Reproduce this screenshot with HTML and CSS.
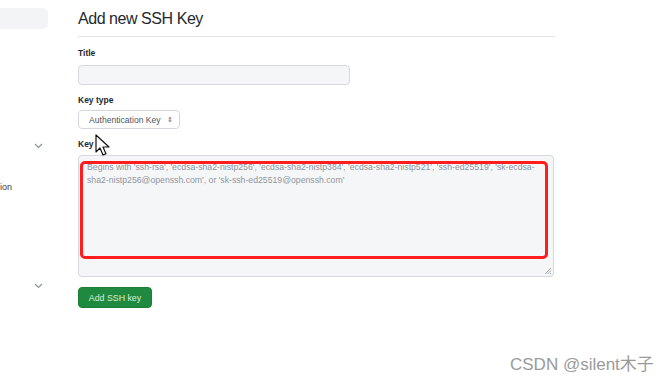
FILE: index.html
```html
<!DOCTYPE html>
<html>
<head>
<meta charset="utf-8">
<link rel="stylesheet" href="styles.css">
</head>
<body>
<div class="page">
  <aside class="sidebar">
    <div class="side-active"></div>
    <div class="side-chev chev1">
      <svg width="9" height="6" viewBox="0 0 9 6"><path d="M1 1l3.5 3.5L8 1" fill="none" stroke="#8c959f" stroke-width="1.2"/></svg>
    </div>
    <div class="side-text">ion</div>
    <div class="side-chev chev2">
      <svg width="9" height="6" viewBox="0 0 9 6"><path d="M1 1l3.5 3.5L8 1" fill="none" stroke="#8c959f" stroke-width="1.2"/></svg>
    </div>
  </aside>
  <main class="main">
    <h2 class="heading">Add new SSH Key</h2>
    <div class="field f-title">
      <label class="label">Title</label>
      <div class="input"></div>
    </div>
    <div class="field f-type">
      <label class="label">Key type</label>
      <div class="select"><span class="sel-text">Authentication Key</span><span class="arrows">&#8661;</span></div>
    </div>
    <div class="field key-field">
      <label class="label">Key</label>
      <div class="textarea">
        <p class="placeholder">Begins with 'ssh-rsa', 'ecdsa-sha2-nistp256', 'ecdsa-sha2-nistp384', 'ecdsa-sha2-nistp521', 'ssh-ed25519', 'sk-ecdsa-sha2-nistp256@openssh.com', or 'sk-ssh-ed25519@openssh.com'</p>
        <div class="highlight"></div>
        <svg class="grip" width="8" height="8" viewBox="0 0 8 8"><path d="M7 1L1 7M7 3.5L3.5 7M7 6L6 7" stroke="#8c959f" stroke-width="0.8"/></svg>
      </div>
      <svg class="cursor" width="16" height="22" viewBox="0 0 16 22"><path d="M1 1v17l4-4 3 7 3-1.3-3-6.7h6z" fill="#fff" stroke="#111" stroke-width="1.2" stroke-linejoin="round"/></svg>
    </div>
    <button class="btn">Add SSH key</button>
  </main>
</div>
<div class="watermark">CSDN @silent木子</div>
</body>
</html>
```
FILE: styles.css
```css
html, body {
  margin: 0;
  padding: 0;
  background: #fff;
  font-family: "Liberation Sans", Arial, "Noto Sans CJK SC", sans-serif;
  color: #24292f;
}
.page {
  display: grid;
  grid-template-columns: 48px 477px;
  column-gap: 30px;
  height: 382px;
}
.sidebar {
  display: flex;
  flex-direction: column;
  padding-top: 8px;
}
.side-active {
  height: 21px;
  background: #f3f4f5;
  border-radius: 0 5px 5px 0;
}
.side-chev {
  display: flex;
  justify-content: flex-end;
  padding-right: 5px;
}
.chev1 { margin-top: 114px; }
.side-text {
  margin-top: 33px;
  font-size: 9px;
  color: #3d444d;
  line-height: 10px;
}
.chev2 { margin-top: 91px; }
.main {
  display: flex;
  flex-direction: column;
  padding-top: 9px;
}
.heading {
  margin: 0;
  font-size: 16px;
  letter-spacing: -0.45px;
  font-weight: normal;
  line-height: 20px;
  padding-bottom: 7px;
  border-bottom: 1px solid #e3e5e8;
  color: #24292f;
}
.field {
  display: flex;
  flex-direction: column;
  align-items: flex-start;
}
.label {
  font-size: 8.5px;
  font-weight: bold;
  line-height: 10px;
  color: #24292f;
}
.f-title { margin-top: 11px; }
.f-title .label { margin-bottom: 7px; }
.input {
  width: 270px;
  height: 18px;
  background: #f5f6f7;
  border: 1px solid #d4d8dc;
  border-radius: 4px;
}
.f-type { margin-top: 10px; }
.f-type .label { margin-bottom: 5px; }
.select {
  width: 90px;
  height: 17px;
  padding: 0 0 0 10px;
  border: 1px solid #d4d8dc;
  border-radius: 4px;
  background: #fff;
  color: #4d555e;
  display: flex;
  align-items: center;
  white-space: nowrap;
}
.sel-text {
  font-size: 8.6px;
}
.arrows {
  margin-left: 6px;
  font-size: 7px;
  color: #57606a;
}
.key-field {
  position: relative;
  margin-top: 10px;
}
.key-field .label { margin-bottom: 6px; }
.textarea {
  position: relative;
  width: 476px;
  height: 122px;
  background: #f5f6f7;
  border: 1px solid #d4d8dc;
  border-radius: 4px;
  padding: 5px 5px 0 8px;
  box-sizing: border-box;
}
.placeholder {
  margin: 0;
  font-size: 8.7px;
  line-height: 13px;
  color: #8f979f;
}
.highlight {
  position: absolute;
  left: 1px;
  top: 5px;
  width: 468px;
  height: 98px;
  border: 3px solid #ff1d1d;
  border-radius: 5px;
  box-sizing: border-box;
}
.grip {
  position: absolute;
  right: 1px;
  bottom: 1px;
}
.cursor {
  position: absolute;
  left: 17px;
  top: -5px;
}
.btn {
  margin-top: 10px;
  align-self: flex-start;
  width: 74px;
  height: 21px;
  background: #1f8a3f;
  border: 1px solid #1a7f37;
  border-radius: 4px;
  color: #d6f0dc;
  font-family: "Liberation Sans", Arial, sans-serif;
  font-size: 8.8px;
  padding: 0;
}
.watermark {
  position: absolute;
  left: 510px;
  top: 356px;
  font-size: 17px;
  line-height: 17px;
  color: #9a9a9a;
  font-family: "Liberation Sans", Arial, "Noto Sans CJK SC", sans-serif;
}
```
